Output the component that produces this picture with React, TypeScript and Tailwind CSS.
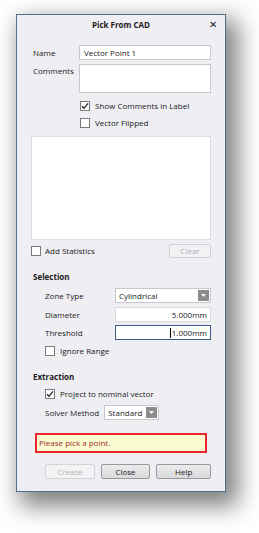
const font = { fontFamily: '"Open Sans", "Noto Sans", sans-serif' };

function Check({ checked }: { checked?: boolean }) {
  return (
    <span className="flex h-[10px] w-[10px] shrink-0 items-center justify-center border border-[#7a7a7a] bg-white">
      {checked && (
        <svg width="8" height="8" viewBox="0 0 8 8">
          <path d="M1 4.2 L3 6.3 L7 1.3" fill="none" stroke="#222" strokeWidth="1.3" />
        </svg>
      )}
    </span>
  );
}

function Field({ value, focused }: { value: string; focused?: boolean }) {
  return (
    <div
      className={`flex h-[15px] w-[96px] items-center justify-end border bg-white pr-[3px] ${
        focused ? "border-[#3d5a80]" : "border-[#dadade]"
      }`}
    >
      {focused && <span className="mr-px h-[10px] w-px bg-black" />}
      {value}
    </div>
  );
}

function Select({ value, width }: { value: string; width: string }) {
  return (
    <div className={`flex h-[15px] ${width} items-center justify-between border border-[#c8c8cc] bg-white pl-[3px] pr-px`}>
      <span>{value}</span>
      <span className="flex h-[11px] w-[11px] items-center justify-center bg-[#8c8c8c]">
        <svg width="5" height="3" viewBox="0 0 5 3">
          <path d="M0 0 H5 L2.5 3 Z" fill="#fff" />
        </svg>
      </span>
    </div>
  );
}

export default function App() {
  return (
    <div className="h-[533px] w-[259px] bg-white pl-[16px] pt-[14px] text-[8px] leading-[12px] text-[#1a1a1a]" style={font}>
      <div className="flex h-[478px] w-[210px] flex-col border border-[#4f6f8c] bg-[#eeeef3] shadow-[8px_10px_22px_4px_rgba(0,0,0,0.5)]">
        <div className="relative flex h-[20px] items-center justify-center font-bold">
          Pick From CAD
          <span className="absolute right-[8px] top-[4px] text-[10px] font-normal leading-none">✕</span>
        </div>

        <div className="flex flex-col pl-[16px] pr-[14px]">
          <div className="mt-[10px] flex items-center">
            <span className="w-[46px]">Name</span>
            <div className="flex h-[15px] flex-1 items-center border border-[#c8c8cc] bg-white pl-[4px]">Vector Point 1</div>
          </div>
          <div className="mt-[4px] flex">
            <span className="w-[46px] pt-px">Comments</span>
            <div className="h-[29px] flex-1 border border-[#c8c8cc] bg-white" />
          </div>
          <div className="ml-[47px] mt-[7px] flex items-center gap-[5px]">
            <Check checked />
            <span>Show Comments in Label</span>
          </div>
          <div className="ml-[47px] mt-[5px] flex items-center gap-[5px]">
            <Check />
            <span>Vector Flipped</span>
          </div>
          <div className="-ml-[2px] mt-[7px] h-[104px] border border-[#dcdce2] bg-white" />
          <div className="-ml-[2px] mt-[4px] flex items-center justify-between">
            <div className="flex items-center gap-[4px]">
              <Check />
              <span>Add Statistics</span>
            </div>
            <div className="flex h-[14px] w-[42px] items-center justify-center rounded-[2px] border border-[#d0d0d4] bg-[#f2f2f4] text-[#b0b0b4]">
              Clear
            </div>
          </div>

          <div className="mt-[13px] font-bold">Selection</div>
          <div className="ml-[12px] mt-[5px] flex flex-col">
            <div className="flex items-center justify-between">
              <span>Zone Type</span>
              <Select value="Cylindrical" width="w-[96px]" />
            </div>
            <div className="mt-[4px] flex items-center justify-between">
              <span>Diameter</span>
              <Field value="5.000mm" />
            </div>
            <div className="mt-[3px] flex items-center justify-between">
              <span>Threshold</span>
              <Field value="1.000mm" focused />
            </div>
            <div className="mt-[5px] flex items-center gap-[5px]">
              <Check />
              <span>Ignore Range</span>
            </div>
          </div>

          <div className="mt-[14px] font-bold">Extraction</div>
          <div className="ml-[12px] mt-[5px] flex flex-col">
            <div className="flex items-center gap-[5px]">
              <Check checked />
              <span>Project to nominal vector</span>
            </div>
            <div className="mt-[5px] flex items-center gap-[5px]">
              <span>Solver Method</span>
              <Select value="Standard" width="w-[55px]" />
            </div>
          </div>

          <div className="ml-[2px] mr-[4px] mt-[13px] flex h-[20px] items-center border-2 border-[#e8262b] bg-[#fbfbd2] pl-[2px] text-[#9c2a2a]">
            Please pick a point.
          </div>

          <div className="ml-[12px] mt-[11px] flex gap-[6px]">
            <div className="flex h-[15px] w-[50px] items-center justify-center rounded-[2px] border border-[#d4d4d8] bg-[#f3f3f5] text-[#b4b4b8]">
              Create
            </div>
            <div className="flex h-[15px] w-[50px] items-center justify-center rounded-[2px] border border-[#9a9a9a] bg-gradient-to-b from-[#ececee] to-[#dadadc]">
              Close
            </div>
            <div className="flex h-[15px] w-[55px] items-center justify-center rounded-[2px] border border-[#9a9a9a] bg-gradient-to-b from-[#ececee] to-[#dadadc]">
              Help
            </div>
          </div>
        </div>
      </div>
    </div>
  );
}
